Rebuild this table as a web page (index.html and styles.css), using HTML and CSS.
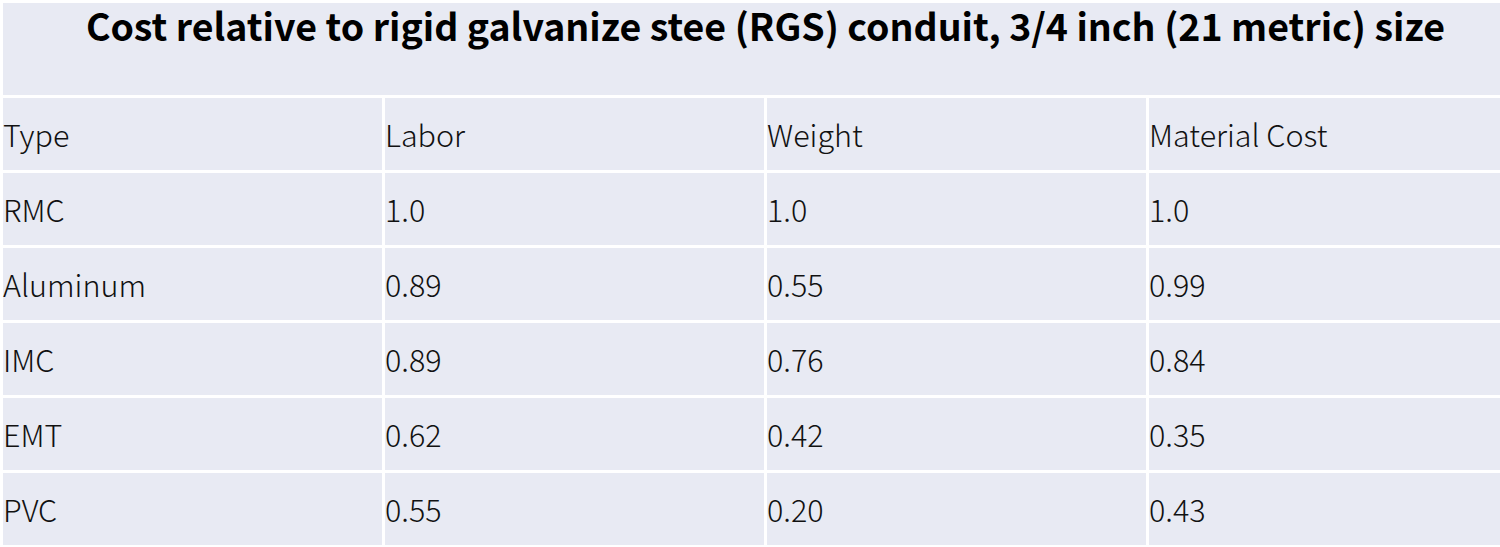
FILE: index.html
```html
<!DOCTYPE html>
<html lang="en">
<head>
    <meta charset="UTF-8">
    <title>Conduit cost</title>
    <link rel="stylesheet" href="styles.css">
</head>
<body>
    <table class="cost-table">
        <tr>
            <td class="title" colspan="4">Cost relative to rigid galvanize stee (RGS) conduit, 3/4 inch (21 metric) size</td>
        </tr>
        <tr><td>Type</td><td>Labor</td><td>Weight</td><td>Material Cost</td></tr>
        <tr><td>RMC</td><td>1.0</td><td>1.0</td><td>1.0</td></tr>
        <tr><td>Aluminum</td><td>0.89</td><td>0.55</td><td>0.99</td></tr>
        <tr><td>IMC</td><td>0.89</td><td>0.76</td><td>0.84</td></tr>
        <tr><td>EMT</td><td>0.62</td><td>0.42</td><td>0.35</td></tr>
        <tr><td>PVC</td><td>0.55</td><td>0.20</td><td>0.43</td></tr>
    </table>
</body>
</html>
```

FILE: styles.css
```css
body {
    margin: 0;
    background: #fff;
    overflow: hidden;
    font-family: "Noto Sans CJK SC", "Noto Sans", sans-serif;
    color: #111;
}

.cost-table {
    width: 1531px;
    border-spacing: 3px;
    table-layout: fixed;
    background: #fff;
}

.cost-table td {
    background: #e8eaf3;
    height: 72px;
    padding: 0;
    font-size: 30.5px;
    font-weight: 300;
    line-height: 40px;
    vertical-align: middle;
}

.cost-table td.title {
    height: 92px;
    text-align: center;
    vertical-align: top;
    font-size: 37.5px;
    font-weight: 700;
    line-height: 44px;
    color: #000;
}
```
